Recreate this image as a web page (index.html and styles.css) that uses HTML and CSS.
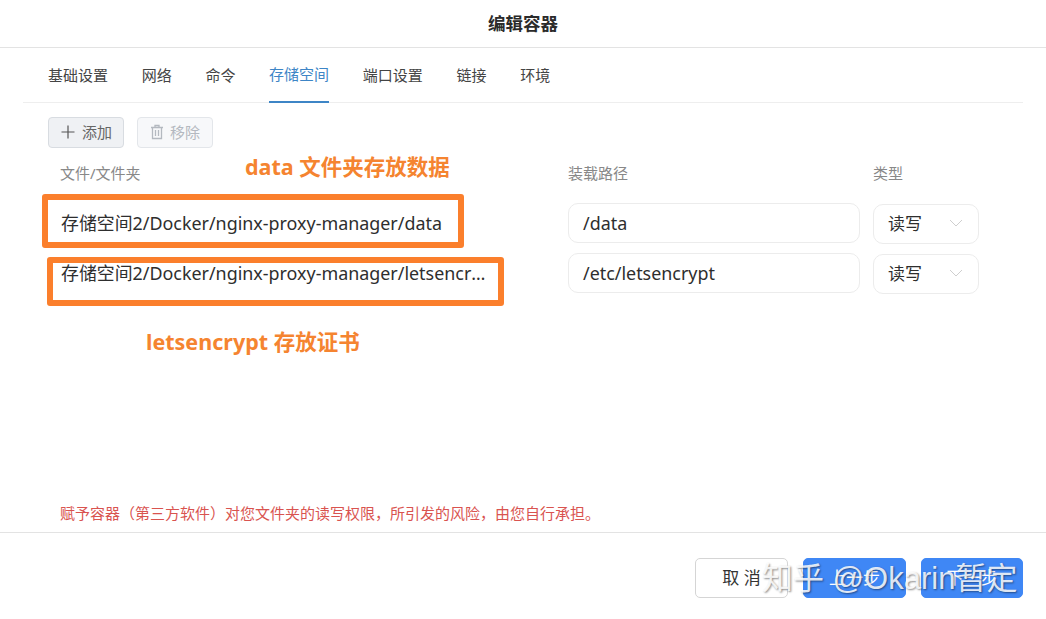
FILE: index.html
```html
<!doctype html>
<html>
    <head>
        <meta charset='utf-8'>
        <title>编辑容器</title>
        <link rel="stylesheet" href="styles.css">
    </head>
    <body>
        <div class='dialog'>
            <div class='title'>编辑容器</div>
            <ul class='tabs'>
                <li>基础设置</li>
                <li>网络</li>
                <li>命令</li>
                <li class='active'>存储空间</li>
                <li>端口设置</li>
                <li>链接</li>
                <li>环境</li>
            </ul>
            <div class='content'>
                <div class='toolbar'>
                    <a href='#' class='btn-tool'>
                        <svg width='16' height='16' viewBox='0 0 16 16'><path d='M8 1.5v13M1.5 8h13' stroke='#555' stroke-width='1.2' fill='none'/></svg>
                        <span>添加</span>
                    </a>
                    <a href='#' class='btn-tool disabled'>
                        <svg width='14' height='16' viewBox='0 0 14 16'><path d='M1 3.5h12M5 3.5V1.5h4v2M2.5 3.5v11h9v-11M5.5 6v6M8.5 6v6' stroke='#b4b9c0' stroke-width='1.3' fill='none'/></svg>
                        <span>移除</span>
                    </a>
                </div>
                <div class='grid head'>
                    <div class='head-file'>文件/文件夹</div>
                    <div>装载路径</div>
                    <div>类型</div>
                </div>
                <div class='grid row'>
                    <div class='path'>存储空间2/Docker/nginx-proxy-manager/data</div>
                    <div class='input'>/data</div>
                    <div class='select'>读写<svg width='14' height='8' viewBox='0 0 14 8'><path d='M1 1l6 6 6-6' stroke='#cfcfcf' fill='none'/></svg></div>
                </div>
                <div class='grid row'>
                    <div class='path'>存储空间2/Docker/nginx-proxy-manager/letsencrypt</div>
                    <div class='input'>/etc/letsencrypt</div>
                    <div class='select'>读写<svg width='14' height='8' viewBox='0 0 14 8'><path d='M1 1l6 6 6-6' stroke='#cfcfcf' fill='none'/></svg></div>
                </div>
                <p class='warn'>赋予容器（第三方软件）对您文件夹的读写权限，所引发的风险，由您自行承担。</p>
            </div>
            <div class='footer'>
                <a href='#' class='btn'>取 消</a>
                <a href='#' class='btn primary'>上一步</a>
                <a href='#' class='btn primary'>下一步</a>
            </div>
        </div>
        <!-- annotations pasted on top of the screenshot -->
        <div class='mark mark-1'></div>
        <div class='mark mark-2'></div>
        <div class='note note-1'>data 文件夹存放数据</div>
        <div class='note note-2'>letsencrypt 存放证书</div>
        <div class='watermark'>知乎 @Okarin暂定</div>
    </body>
</html>
```

FILE: styles.css
```css
html,body,ul,li,p {
    padding:0px;
    margin:0px;
}
ul,li {
    list-style:none;
}
a {
    text-decoration: none;
}
body {
    width:1046px;
    height:619px;
    position:relative;
    overflow:hidden;
    background:#fff;
    color:#333;
    font-family:'Noto Sans','Noto Sans CJK SC',sans-serif;
}
.title {
    height:47px;
    line-height:47px;
    text-align:center;
    font-size:17.5px;
    font-weight:bold;
    color:#2b2b2b;
    border-bottom:1px solid #e3e3e3;
}
.tabs {
    display:flex;
    gap:33.7px;
    height:54px;
    margin:0 23px;
    padding-left:25px;
    border-bottom:1px solid #eee;
}
.tabs li {
    line-height:54px;
    font-size:15px;
    color:#444;
}
.tabs .active {
    color:#3d85c6;
    border-bottom:2px solid #3d85c6;
    height:53px;
    line-height:53px;
}
.content {
    box-sizing:border-box;
    display:flex;
    flex-direction:column;
    height:429px;
    padding:14px 48px 9px;
}
.toolbar {
    display:flex;
    gap:13px;
}
.btn-tool {
    box-sizing:border-box;
    display:flex;
    align-items:center;
    justify-content:center;
    gap:6px;
    width:76px;
    height:31px;
    padding-bottom:2px;
    font-size:15px;
    color:#666;
    background:#eff1f4;
    border:1px solid #d8dce1;
    border-radius:4px;
}
.btn-tool.disabled {
    color:#b4b9c0;
    background:#f7f8fa;
    border-color:#e3e6ea;
}
.grid {
    display:grid;
    grid-template-columns:520px 305px 106px;
}
.head {
    margin-top:15px;
    line-height:20px;
    font-size:15px;
    color:#888;
}
.head-file {
    padding-left:12px;
}
.row {
    height:50px;
    align-items:center;
    font-size:17.9px;
    color:#2e2e2e;
}
.head + .row {
    margin-top:15px;
}
.path {
    padding:0 0 2px 13px;
    width:426px;
    white-space:nowrap;
    overflow:hidden;
    text-overflow:ellipsis;
}
.input {
    box-sizing:border-box;
    width:292px;
    height:40px;
    line-height:38px;
    padding-left:14px;
    border:1px solid #ececec;
    border-radius:10px;
}
.select {
    box-sizing:border-box;
    display:flex;
    align-items:center;
    justify-content:space-between;
    width:106px;
    height:40px;
    margin-top:2px;
    padding:0 15px 3px 14px;
    font-size:17px;
    border:1px solid #ececec;
    border-radius:10px;
}
.warn {
    margin-top:auto;
    padding-left:12px;
    line-height:20px;
    font-size:15px;
    color:#d9534f;
}
.footer {
    box-sizing:border-box;
    border-top:1px solid #e3e3e3;
    height:87px;
    display:flex;
    justify-content:flex-end;
    gap:15px;
    padding:25px 23px 0 0;
}
.btn {
    box-sizing:border-box;
    width:93px;
    height:40px;
    line-height:38px;
    text-align:center;
    font-size:17px;
    color:#333;
    border:1px solid #d5d5d5;
    border-radius:5px;
}
.btn.primary {
    width:103px;
    color:#fff;
    background:#3f87f5;
    border-color:#3f87f5;
}
.btn.primary:last-child {
    width:102px;
}
.mark {
    position:absolute;
    box-sizing:border-box;
    border:6px solid #fb7f2c;
    border-radius:3px;
}
.mark-1 {
    left:42px;
    top:194px;
    width:422px;
    height:54px;
}
.mark-2 {
    left:47px;
    top:257px;
    width:457px;
    height:49px;
}
.note {
    position:absolute;
    font-size:21.5px;
    font-weight:bold;
    color:#f58430;
    white-space:nowrap;
}
.note-1 {
    left:245px;
    top:150px;
}
.note-2 {
    left:146px;
    top:325px;
}
.watermark {
    position:absolute;
    left:762px;
    top:553px;
    font-family:'Liberation Sans','Noto Sans CJK SC',sans-serif;
    font-size:31px;
    color:rgba(255,255,255,.85);
    text-shadow:1px 1px 2px rgba(0,0,0,.45);
    white-space:nowrap;
}
```
